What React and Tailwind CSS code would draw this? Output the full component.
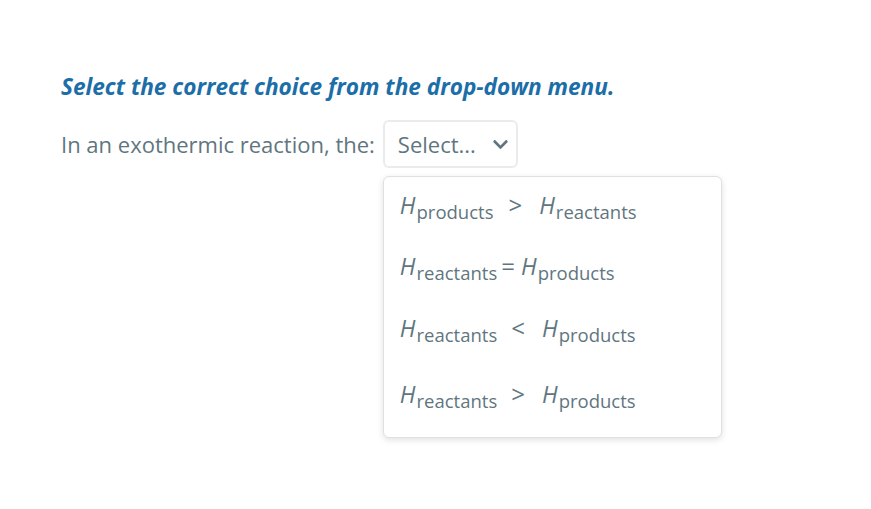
import { FaChevronDown } from "react-icons/fa";

const options = [
  { left: "products", op: ">", right: "reactants", opClass: "ml-[15px] mr-[17px]", rowClass: "mt-[15px]" },
  { left: "reactants", op: "=", right: "products", opClass: "ml-[4px] mr-[6px]", rowClass: "mt-[33px]" },
  { left: "reactants", op: "<", right: "products", opClass: "ml-[14px] mr-[17px]", rowClass: "mt-[34px]" },
  { left: "reactants", op: ">", right: "products", opClass: "ml-[14px] mr-[17px]", rowClass: "mt-[38px]" },
];

function Term({ sub }) {
  return (
    <span className="inline-flex items-baseline">
      <span className="italic text-[23px] mr-[1px]">H</span>
      <span className="text-[18.5px] relative top-[5px]">{sub}</span>
    </span>
  );
}

export default function App() {
  return (
    <div
      className="w-[871px] h-[509px] bg-white text-[#5f7680]"
      style={{ fontFamily: '"Open Sans", sans-serif' }}
    >
      <div className="pt-[71px] pl-[61px]">
        {/* Instruction */}
        <h2 className="text-[22.6px] font-bold italic text-[#1b6ea7] leading-[32px]">
          Select the correct choice from the drop-down menu.
        </h2>

        {/* Question */}
        <div className="mt-[17px] flex items-start">
          <span className="text-[22px] leading-[48px] mr-[8px]">
            In an exothermic reaction, the:
          </span>
          <div className="flex flex-col">
            <button className="w-[135px] h-[48px] flex items-center justify-between pl-[13px] pr-[7px] border-2 border-[#e9ecee] rounded-md text-[22px] text-[#5f7680]">
              <span>Select...</span>
              <FaChevronDown className="w-[17px] h-[17px] text-[#5f7680]" />
            </button>

            {/* Menu */}
            <div className="mt-[8px] w-[339px] h-[262px] border border-[#dde1e3] rounded-md shadow-[0_2px_6px_rgba(0,0,0,0.12)] bg-white pl-[16px] flex flex-col">
              {options.map((o, i) => (
                <div key={i} className={"flex items-baseline leading-[26px] " + o.rowClass}>
                  <Term sub={o.left} />
                  <span className={"text-[24px] " + o.opClass}>{o.op}</span>
                  <Term sub={o.right} />
                </div>
              ))}
            </div>
          </div>
        </div>
      </div>
    </div>
  );
}
